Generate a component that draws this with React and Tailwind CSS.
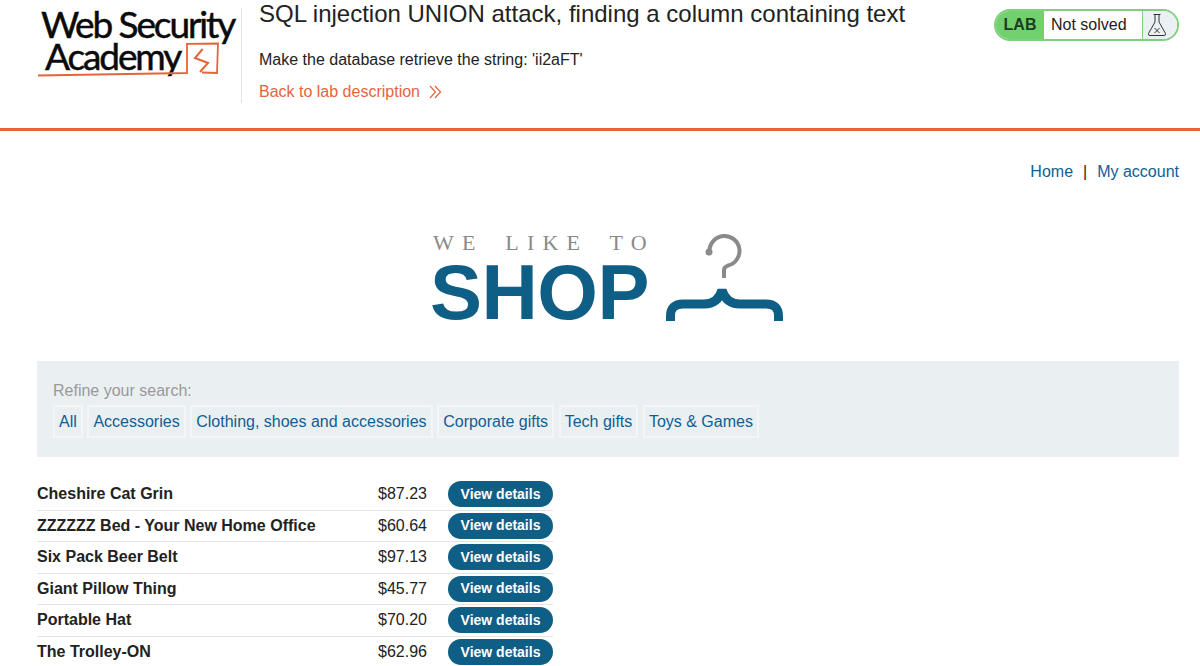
const products = [
  { name: 'Cheshire Cat Grin', price: '$87.23' },
  { name: 'ZZZZZZ Bed - Your New Home Office', price: '$60.64' },
  { name: 'Six Pack Beer Belt', price: '$97.13' },
  { name: 'Giant Pillow Thing', price: '$45.77' },
  { name: 'Portable Hat', price: '$70.20' },
  { name: 'The Trolley-ON', price: '$62.96' },
];

const filters = ['All', 'Accessories', 'Clothing, shoes and accessories', 'Corporate gifts', 'Tech gifts', 'Toys & Games'];

function AcademyLogo() {
  return (
    <div className="relative w-[204px] h-[82px] text-[#0a0a0a] font-['Lato',sans-serif] [-webkit-text-stroke:0.5px_#0a0a0a]">
      <div className="pt-[4px] text-[37px] leading-[32px] tracking-[-2.100px] whitespace-nowrap">Web Security</div>
      <div className="pl-[4px] text-[37px] leading-[32px] tracking-[-2.100px] whitespace-nowrap">Academy</div>
      <svg className="absolute left-[-4px] top-0 w-[210px] h-[82px]" viewBox="0 0 210 82" fill="none" stroke="#e5653a">
        <path d="M1 71.500 C50 70.500 100 70 150 69 V39.800 L181 39.500 L180 69 L165 68.500" strokeWidth="1.800" />
        <path d="M165.700 45 L158 54 L171 59 L163 68" strokeWidth="2" />
      </svg>
    </div>
  );
}

function LabBadge() {
  return (
    <div className="flex h-[32px] w-[185px] items-stretch rounded-full border-2 border-[#81cf7e] overflow-hidden text-[16px]">
      <div className="flex w-[48px] items-center justify-center bg-[#70d16d] font-bold text-[#1f3d1e]">LAB</div>
      <div className="flex flex-1 items-center pl-[7px] bg-white text-[#222]">Not solved</div>
      <div className="flex w-[35px] items-center pl-[4px] border-l border-[#81cf7e] bg-[#ebf0f2]">
        <svg width="20" height="24" viewBox="0 0 20 24" fill="none" stroke="#333" strokeWidth="1">
          <path d="M6.500 1.500 H13.500 M8 1.500 V9 L1.500 20.500 Q1 22.500 3 22.500 H17 Q19 22.500 18.500 20.500 L12 9 V1.500" />
          <path d="M7.500 15 L12.500 20 M12.500 15 L7.500 20" />
        </svg>
      </div>
    </div>
  );
}

function ShopLogo() {
  return (
    <div className="flex items-end justify-center">
      <div className="flex w-[220px] flex-col">
        <div className="pl-[5px] font-['Liberation_Serif',serif] text-[22px] leading-[24px] tracking-[8.200px] [word-spacing:8px] text-[#8a8a8a] whitespace-pre">WE LIKE TO</div>
        <div className="mt-[4px] pl-[2px] font-['Liberation_Sans',sans-serif] font-bold text-[78px] leading-[66px] tracking-[-0.500px] text-[#0f5e85] whitespace-nowrap">SHOP</div>
      </div>
      <svg className="ml-[18px] mr-[3px] mb-[3px]" width="119" height="90" viewBox="0 0 119 90" fill="none">
        <path d="M43.500 19 A 15 15 0 1 1 62 33.500 Q 58 35 58 38 V 46" stroke="#8a8a8a" strokeWidth="4" />
        <circle cx="43" cy="20" r="3.500" fill="#8a8a8a" />
        <path d="M4.500 89 V 84 Q 4.500 72 17 72 H 38 Q 52 72 56 58 Q 60 72 74 72 H 100 Q 112.500 72 112.500 84 V 89" stroke="#0f5e85" strokeWidth="9" strokeLinejoin="bevel" />
      </svg>
    </div>
  );
}

export default function App() {
  return (
    <div className="min-h-screen bg-white font-['Liberation_Sans',Arial,sans-serif] overflow-hidden">
      {/* Lab header */}
      <header className="flex h-[131px] border-b-[3px] border-[#e5653a] pl-[41px] pr-[21px]">
        <div className="pt-[4px]">
          <AcademyLogo />
        </div>
        <div className="ml-[-4px] mt-[8px] h-[95px] w-px bg-[#e4e4e4]" />
        <div className="ml-[17px] flex flex-1 flex-col">
          <h2 className="text-[24px] leading-[28px] text-[#222] whitespace-nowrap">SQL injection UNION attack, finding a column containing text</h2>
          <p className="mt-[22px] text-[16px] leading-[20px] text-[#222]">Make the database retrieve the string: 'ii2aFT'</p>
          <a className="mt-[12px] flex items-center text-[16px] leading-[20px] text-[#e5653a]">
            Back to lab description
            <svg className="ml-[8px]" width="14" height="14" viewBox="0 0 14 14" fill="none" stroke="#e5653a" strokeWidth="1.200">
              <path d="M2 1 L7.500 7 L2 13 M7 1 L12.500 7 L7 13" />
            </svg>
          </a>
        </div>
        <div className="pt-[9px]">
          <LabBadge />
        </div>
      </header>

      <main className="pl-[37px] pr-[21px]">
        {/* Top nav */}
        <nav className="flex justify-end pt-[31px] text-[16px] leading-[20px] text-[#222]">
          <a className="text-[#0f5e95]">Home</a>
          <span className="mx-[10px]">|</span>
          <a className="text-[#0f5e95]">My account</a>
        </nav>

        <div className="mt-[49px]">
          <ShopLogo />
        </div>

        {/* Filters */}
        <section className="mt-[36px] h-[96px] bg-[#eaeff2] px-[16px] pt-[21px]">
          <div className="text-[16px] leading-[18px] text-[#999]">Refine your search:</div>
          <div className="mt-[5px] flex gap-[4.600px]">
            {filters.map((f) => (
              <a key={f} className="border-2 border-[#f3f6f8] px-[4px] h-[33px] flex items-center text-[16px] text-[#0f5e95] whitespace-nowrap">{f}</a>
            ))}
          </div>
        </section>

        {/* Product table */}
        <div className="mt-[22px] w-[516px]">
          {products.map((p, i) => (
            <div key={p.name} className={`flex h-[31.500px] items-center ${i < products.length - 1 ? 'border-b border-[#e4e4e4]' : ''}`}>
              <div className="w-[341px] text-[16px] font-bold text-[#222] whitespace-nowrap">{p.name}</div>
              <div className="w-[70px] text-[16px] text-[#222]">{p.price}</div>
              <button className="h-[26px] w-[105px] rounded-full bg-[#0f5e85] text-[14px] font-bold text-white">View details</button>
            </div>
          ))}
        </div>
      </main>
    </div>
  );
}
